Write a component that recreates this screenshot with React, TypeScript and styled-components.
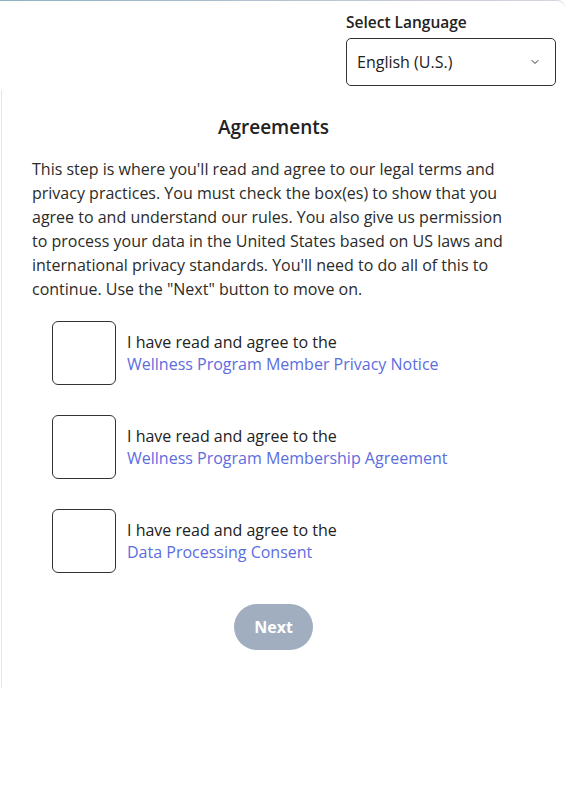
import React, { FC, useState } from 'react'
import styled, { createGlobalStyle } from 'styled-components'
import { ChevronDown } from 'lucide-react'

const agreements = [
	'Wellness Program Member Privacy Notice',
	'Wellness Program Membership Agreement',
	'Data Processing Consent',
]

const App: FC = () => {
	const [checked, setChecked] = useState<boolean[]>([false, false, false])

	function toggle(index: number) {
		setChecked((prev) => prev.map((value, i) => (i === index ? !value : value)))
	}

	const allChecked = checked.every(Boolean)

	return (
		<Frame>
			<GlobalStyle />
			<Header>
				<LanguageBlock>
					<Label>Select Language</Label>
					<Select>
						<span>English (U.S.)</span>
						<ChevronDown size={12} strokeWidth={2} />
					</Select>
				</LanguageBlock>
			</Header>
			<Panel>
				<Title>Agreements</Title>
				<Description>
					This step is where you'll read and agree to our legal terms and privacy practices. You must check the box(es) to show that you agree to and understand our rules. You also give us permission to process your data in the United States based on US laws and international privacy standards. You'll need to do all of this to continue. Use the "Next" button to move on.
				</Description>
				<List>
					{agreements.map((name, i) => (
						<Row key={name}>
							<Box $checked={checked[i]} onClick={() => toggle(i)} />
							<RowText>
								<div>I have read and agree to the</div>
								<DocLink href="#">{name}</DocLink>
							</RowText>
						</Row>
					))}
				</List>
				<ButtonRow>
					<NextButton disabled={!allChecked}>Next</NextButton>
				</ButtonRow>
			</Panel>
		</Frame>
	)
}

export default App

const GlobalStyle = createGlobalStyle`
	body {
		margin: 0;
		background: #ffffff;
		font-family: "Open Sans", "Liberation Sans", sans-serif;
		color: #222222;
	}
`

const Frame = styled.div`
	height: 788px;
	box-sizing: border-box;
	border-top: 1px solid transparent;
	border-top-right-radius: 8px;
	background:
		linear-gradient(#ffffff, #ffffff) padding-box,
		linear-gradient(to right, #8cb2c6, #b9c4d2 55%, #ddd4de) border-box;
`

const Header = styled.div`
	display: flex;
	justify-content: flex-end;
	padding: 11px 9px 0 0;
`

const LanguageBlock = styled.div`
	width: 210px;
`

const Label = styled.div`
	font-size: 15.5px;
	font-weight: 600;
	line-height: 20px;
	color: #222222;
	margin-bottom: 6px;
`

const Select = styled.div`
	display: flex;
	align-items: center;
	justify-content: space-between;
	height: 48px;
	box-sizing: border-box;
	padding: 0 14px 0 10px;
	border: 1px solid #333333;
	border-radius: 5px;
	font-size: 16px;
	color: #222222;

	svg {
		color: #333333;
	}
`

const Panel = styled.div`
	margin: 4px 0 0 1px;
	width: 544px;
	height: 598px;
	box-sizing: border-box;
	padding: 24px 30px 0;
	border-left: 1px solid #e4e4e4;
`

const Title = styled.h2`
	margin: 0 0 17px;
	text-align: center;
	font-size: 19px;
	font-weight: 600;
	line-height: 26px;
	color: #222222;
`

const Description = styled.p`
	margin: 0 0 20px;
	font-size: 16px;
	line-height: 24px;
	color: #2b2b2b;
`

const List = styled.div`
	display: flex;
	flex-direction: column;
	gap: 30px;
	padding-left: 20px;
`

const Row = styled.div`
	display: flex;
	align-items: center;
	gap: 11px;
`

const Box = styled.div<{ $checked: boolean }>`
	width: 64px;
	height: 64px;
	flex-shrink: 0;
	box-sizing: border-box;
	border: 1px solid #333333;
	border-radius: 6px;
	background: ${(p) => (p.$checked ? '#5c6de0' : '#ffffff')};
	cursor: pointer;
`

const RowText = styled.div`
	font-size: 16px;
	line-height: 22px;
	color: #222222;
`

const DocLink = styled.a`
	color: #5c6de0;
	text-decoration: none;
`

const ButtonRow = styled.div`
	display: flex;
	justify-content: center;
	margin-top: 31px;
`

const NextButton = styled.button`
	width: 79px;
	height: 46px;
	border: none;
	border-radius: 23px;
	background: #a0aec0;
	color: #ffffff;
	font-family: "Open Sans", "Liberation Sans", sans-serif;
	font-size: 16px;
	font-weight: 700;
	cursor: pointer;

	&:disabled {
		cursor: default;
	}
`
